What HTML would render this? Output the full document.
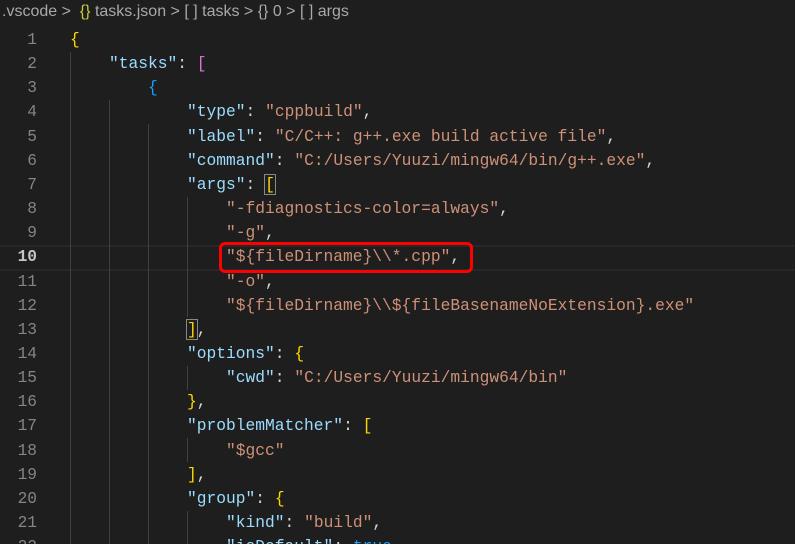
<!DOCTYPE html>
<html style="overflow:hidden;height:544px"><head><meta charset="utf-8"><style>
body{margin:0;width:795px;height:544px;background:#1e1e1e;overflow:hidden;position:relative;font-family:"Liberation Mono",monospace;}
.bc{position:absolute;left:2px;top:3px;font-family:"Liberation Sans",sans-serif;font-size:16px;color:#a9a9a9;white-space:pre;}
.ln{position:absolute;left:0;width:37px;text-align:right;color:#858585;font-size:16.2px;}
.cd{position:absolute;left:70px;font-size:16.25px;white-space:pre;color:#d4d4d4;}
.row{position:absolute;height:24.15px;line-height:24.15px;}
.k{color:#9cdcfe}.s{color:#ce9178}.y{color:#ffd700}.p{color:#da70d6}.b{color:#179fff}
.g{position:absolute;width:1px;background:#404040;}
</style></head><body>
<div class="bc">.vscode &gt;  <span style="color:#cbcb41">{}</span> tasks.json &gt; [ ] tasks &gt; {} 0 &gt; [ ] args</div>
<div style="position:absolute;left:0;right:0;top:245px;height:22px;border-top:2px solid #282828;border-bottom:2px solid #282828"></div>
<div class="g" style="left:70px;top:52px;height:492px"></div>
<div class="g" style="left:109px;top:100px;height:444px"></div>
<div class="g" style="left:148px;top:124px;height:420px"></div>
<div class="g" style="left:187px;top:197px;height:120px"></div>
<div class="g" style="left:187px;top:366px;height:24px"></div>
<div class="g" style="left:187px;top:438px;height:24px"></div>
<div class="g" style="left:187px;top:511px;height:33px"></div>
<div id="c"></div>
<div style="position:absolute;left:219px;top:242px;width:248px;height:25px;border:3px solid #f00;border-radius:6px"></div>
<script>
const L=[
'<span class="y">{</span>',
'    <span class="k">"tasks"</span>: <span class="p">[</span>',
'        <span class="b">{</span>',
'            <span class="k">"type"</span>: <span class="s">"cppbuild"</span>,',
'            <span class="k">"label"</span>: <span class="s">"C/C++: g++.exe build active file"</span>,',
'            <span class="k">"command"</span>: <span class="s">"C:/Users/Yuuzi/mingw64/bin/g++.exe"</span>,',
'            <span class="k">"args"</span>: <span class="y" style="outline:1px solid #888">[</span>',
'                <span class="s">"-fdiagnostics-color=always"</span>,',
'                <span class="s">"-g"</span>,',
'                <span class="s">"${fileDirname}\\\\*.cpp"</span>,',
'                <span class="s">"-o"</span>,',
'                <span class="s">"${fileDirname}\\\\${fileBasenameNoExtension}.exe"</span>',
'            <span class="y" style="outline:1px solid #888">]</span>,',
'            <span class="k">"options"</span>: <span class="y">{</span>',
'                <span class="k">"cwd"</span>: <span class="s">"C:/Users/Yuuzi/mingw64/bin"</span>',
'            <span class="y">}</span>,',
'            <span class="k">"problemMatcher"</span>: <span class="y">[</span>',
'                <span class="s">"$gcc"</span>',
'            <span class="y">]</span>,',
'            <span class="k">"group"</span>: <span class="y">{</span>',
'                <span class="k">"kind"</span>: <span class="s">"build"</span>,',
'                <span class="k">"isDefault"</span>: <span class="b">true</span>'];
let h='';
L.forEach((t,i)=>{const top=28+24.15*i;
h+=`<div class="row ln" style="top:${top}px;${i==9?'color:#c6c6c6;font-weight:bold':''}">${i+1}</div><div class="row cd" style="top:${top}px">${t}</div>`;});
document.getElementById('c').innerHTML=h;
</script>
</body></html>
